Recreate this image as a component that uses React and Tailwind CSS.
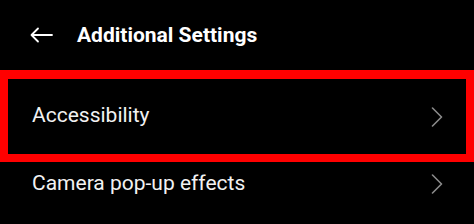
import React from "react";

function Chevron() {
  return (
    <svg width="12" height="20" viewBox="0 0 12 20" fill="none" className="shrink-0">
      <path d="M1.5 1 L10.5 10 L1.5 19" stroke="#8a8a8a" strokeWidth="1.6" strokeLinecap="round" strokeLinejoin="round" />
    </svg>
  );
}

export default function App() {
  return (
    <div className="w-[474px] h-[224px] bg-black overflow-hidden text-white" style={{ fontFamily: "Roboto, 'Noto Sans', sans-serif" }}>
      <div className="h-[70px] flex items-center pl-[30px]">
        <svg width="23" height="16" viewBox="0 0 23 16" fill="none" className="shrink-0">
          <path d="M22 8 H1.5 M8 1.5 L1.5 8 L8 14.5" stroke="#ffffff" strokeWidth="1.8" strokeLinecap="round" strokeLinejoin="round" />
        </svg>
        <span className="ml-[24px] text-[21px] font-bold leading-none mt-[1px]">Additional Settings</span>
      </div>
      <div className="h-[92px] border-[8px] border-[#ff0000] border-t-[9px] flex items-center justify-between pl-[24px] pr-[23px]">
        <span className="text-[21px] leading-none text-[#f2f2f2] -mt-[2px]">Accessibility</span>
        <Chevron />
      </div>
      <div className="h-[44px] flex items-center justify-between pl-[32px] pr-[31px]">
        <span className="text-[21px] leading-none text-[#f2f2f2] -mt-[1px]">Camera pop-up effects</span>
        <Chevron />
      </div>
    </div>
  );
}
